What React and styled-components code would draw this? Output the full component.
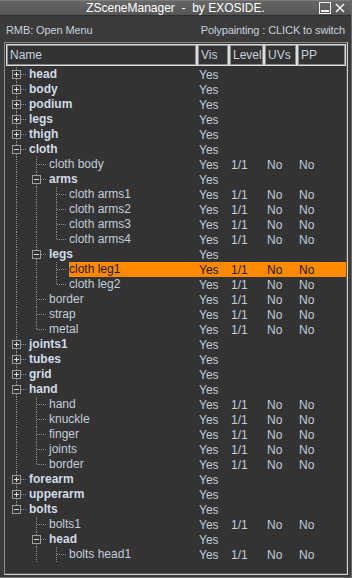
import React from 'react';
import styled, { createGlobalStyle } from 'styled-components';

const GlobalStyle = createGlobalStyle`
  html, body {
    margin: 0;
    padding: 0;
    background: #3b3b3b;
  }
  body {
    font-family: "Liberation Sans", Arial, sans-serif;
    font-size: 11px;
  }
`;

const tree = [
  { name: 'head', kids: [] },
  { name: 'body', kids: [] },
  { name: 'podium', kids: [] },
  { name: 'legs', kids: [] },
  { name: 'thigh', kids: [] },
  {
    name: 'cloth',
    open: true,
    kids: [
      { name: 'cloth body' },
      {
        name: 'arms',
        open: true,
        kids: [
          { name: 'cloth arms1' },
          { name: 'cloth arms2' },
          { name: 'cloth arms3' },
          { name: 'cloth arms4' },
        ],
      },
      {
        name: 'legs',
        open: true,
        kids: [{ name: 'cloth leg1', selected: true }, { name: 'cloth leg2' }],
      },
      { name: 'border' },
      { name: 'strap' },
      { name: 'metal' },
    ],
  },
  { name: 'joints1', kids: [] },
  { name: 'tubes', kids: [] },
  { name: 'grid', kids: [] },
  {
    name: 'hand',
    open: true,
    kids: [
      { name: 'hand' },
      { name: 'knuckle' },
      { name: 'finger' },
      { name: 'joints' },
      { name: 'border' },
    ],
  },
  { name: 'forearm', kids: [] },
  { name: 'upperarm', kids: [] },
  {
    name: 'bolts',
    open: true,
    kids: [
      { name: 'bolts1' },
      { name: 'head', open: true, tail: true, kids: [{ name: 'bolts head1', tail: true }] },
    ],
  },
];

// flatten the tree into rows with guide-line info
function flatten(nodes, guides = [], out = []) {
  nodes.forEach((node, i) => {
    const last = i === nodes.length - 1 && !node.tail;
    out.push({ ...node, level: guides.length, guides, last });
    if (node.kids && node.open) {
      flatten(node.kids, [...guides, !last], out);
    }
  });
  return out;
}

const rows = flatten(tree);

function App() {
  return (
    <>
      <GlobalStyle />
      <Window>
        <TitleBar>
          <span />
          <Title>ZSceneManager&nbsp;&nbsp;-&nbsp;&nbsp;by EXOSIDE.</Title>
          <TitleButtons>
            <svg width="12" height="12" viewBox="0 0 12 12">
              <rect x="0.5" y="0.5" width="11" height="11" fill="none" stroke="#f0f0f0" />
              <rect x="2" y="8" width="8" height="2" fill="#f0f0f0" />
            </svg>
            <svg width="10" height="10" viewBox="0 0 10 10">
              <path d="M1 1 L9 9 M9 1 L1 9" stroke="#f0f0f0" strokeWidth="1.6" />
            </svg>
          </TitleButtons>
        </TitleBar>

        <InfoBar>
          <span>RMB: Open Menu</span>
          <span>Polypainting : CLICK to switch</span>
        </InfoBar>

        <Panel>
          <HeaderRow>
            <HeadCell $w={191}>Name</HeadCell>
            <HeadCell $w={32}>Vis</HeadCell>
            <HeadCell $w={35}>Level</HeadCell>
            <HeadCell $w={33}>UVs</HeadCell>
            <HeadCell $w={49}>PP</HeadCell>
          </HeaderRow>

          <Rows>
            {rows.map((row, i) => {
              const parent = !!row.kids;
              return (
                <Row key={i}>
                  <NameCell>
                    {row.guides.map((on, g) => (
                      <Guide key={g} $up={on} $down={on} />
                    ))}
                    <Guide $up $down={!row.last} $across>
                      {parent && (
                        <Toggle>
                          <svg width="7" height="7" viewBox="0 0 7 7">
                            <rect x="1" y="3" width="5" height="1" fill="#dcdcdc" />
                            {!row.open && <rect x="3" y="1" width="1" height="5" fill="#dcdcdc" />}
                          </svg>
                        </Toggle>
                      )}
                    </Guide>
                    <Label $bold={parent} $selected={row.selected}>
                      {row.name}
                    </Label>
                  </NameCell>
                  <Values $selected={row.selected}>
                    <Value $w={32}>Yes</Value>
                    {!parent && (
                      <>
                        <Value $w={35}>1/1</Value>
                        <Value $w={33} $pad={3}>No</Value>
                        <Value $w={49}>No</Value>
                      </>
                    )}
                  </Values>
                </Row>
              );
            })}
          </Rows>
        </Panel>
      </Window>
    </>
  );
}
export default App;

const Window = styled.div`
  width: 352px;
  height: 578px;
  display: flex;
  flex-direction: column;
  background: #3b3b3b;
  box-sizing: border-box;
  border-right: 1px solid #6a6a6a;
  border-bottom: 1px solid #6a6a6a;
`;

const TitleBar = styled.div`
  height: 16px;
  display: grid;
  grid-template-columns: 1fr auto 1fr;
  align-items: center;
  background: linear-gradient(#666666, #555555);
  border-top: 1px solid #7a7a7a;
  border-bottom: 1px solid #2e2e2e;
  box-sizing: border-box;
  color: #ffffff;
  font-family: "Liberation Sans", Arial, sans-serif;
  font-size: 12px;
`;

const Title = styled.span`
  white-space: nowrap;
`;

const TitleButtons = styled.div`
  justify-self: end;
  display: flex;
  align-items: center;
  gap: 4px;
  padding-right: 6px;
`;

const InfoBar = styled.div`
  height: 26px;
  display: flex;
  justify-content: space-between;
  align-items: center;
  padding: 2px 6px 0 6px;
  box-sizing: border-box;
  color: #c9d2dc;
  letter-spacing: -0.1px;
`;

const Panel = styled.div`
  flex: 1;
  margin: 0 3px 2px 4px;
  padding: 1px;
  background: #333333;
  border: 1px solid #8c8c8c;
  border-right-color: #d0d0d0;
  border-bottom-color: #d0d0d0;
  box-shadow: inset -1px -1px 0 #555;
  overflow: hidden;
  display: flex;
  flex-direction: column;
`;

const HeaderRow = styled.div`
  display: flex;
  height: 22px;
  margin-bottom: 1px;
`;

const HeadCell = styled.div`
  width: ${(p) => p.$w}px;
  box-sizing: border-box;
  border: 1px solid #dcdcdc;
  box-shadow: inset 1px 1px 0 #8a8a8a, inset -1px -1px 0 #8a8a8a;
  padding: 0 3px;
  display: flex;
  align-items: center;
  color: #c9d2dc;
  font-size: 12px;
`;

const Rows = styled.div`
  display: flex;
  flex-direction: column;
`;

const Row = styled.div`
  display: flex;
  height: 15px;
`;

const NameCell = styled.div`
  width: 191px;
  display: flex;
  align-items: center;
`;

const Guide = styled.span`
  position: relative;
  flex: none;
  width: 20px;
  height: 15px;

  &::before {
    content: '';
    position: absolute;
    left: 10px;
    top: ${(p) => (p.$up ? 0 : 7)}px;
    bottom: ${(p) => (p.$down ? 0 : 8)}px;
    border-left: 1px dotted #8e8e8e;
    display: ${(p) => (p.$up || p.$down ? 'block' : 'none')};
  }

  &::after {
    content: '';
    position: absolute;
    left: 11px;
    width: 9px;
    top: 7px;
    border-top: 1px dotted #8e8e8e;
    display: ${(p) => (p.$across ? 'block' : 'none')};
  }
`;

const Toggle = styled.span`
  position: absolute;
  left: 6px;
  top: 3px;
  width: 9px;
  height: 9px;
  box-sizing: border-box;
  border: 1px solid #9a9a9a;
  background: #333333;
  z-index: 1;
  display: flex;

  svg {
    display: block;
  }
`;

const Label = styled.span`
  margin-left: 3px;
  padding: 0 2px 0 0;
  white-space: nowrap;
  font-weight: ${(p) => (p.$bold ? 700 : 400)};
  font-size: 12px;
  color: ${(p) => (p.$selected ? '#1e1608' : p.$bold ? '#d2dbe6' : '#c3cdd8')};
  line-height: 15px;
  flex: ${(p) => (p.$selected ? 1 : 'none')};
  background: ${(p) => (p.$selected ? '#ff8a00' : 'transparent')};
`;

const Values = styled.div`
  flex: 1;
  display: flex;
  align-items: center;
  background: ${(p) => (p.$selected ? '#ff8a00' : 'transparent')};
  color: ${(p) => (p.$selected ? '#1e1608' : '#c3cdd8')};
  font-size: 12px;
`;

const Value = styled.span`
  width: ${(p) => p.$w}px;
  box-sizing: border-box;
  padding-left: ${(p) => p.$pad || 2}px;
`;
